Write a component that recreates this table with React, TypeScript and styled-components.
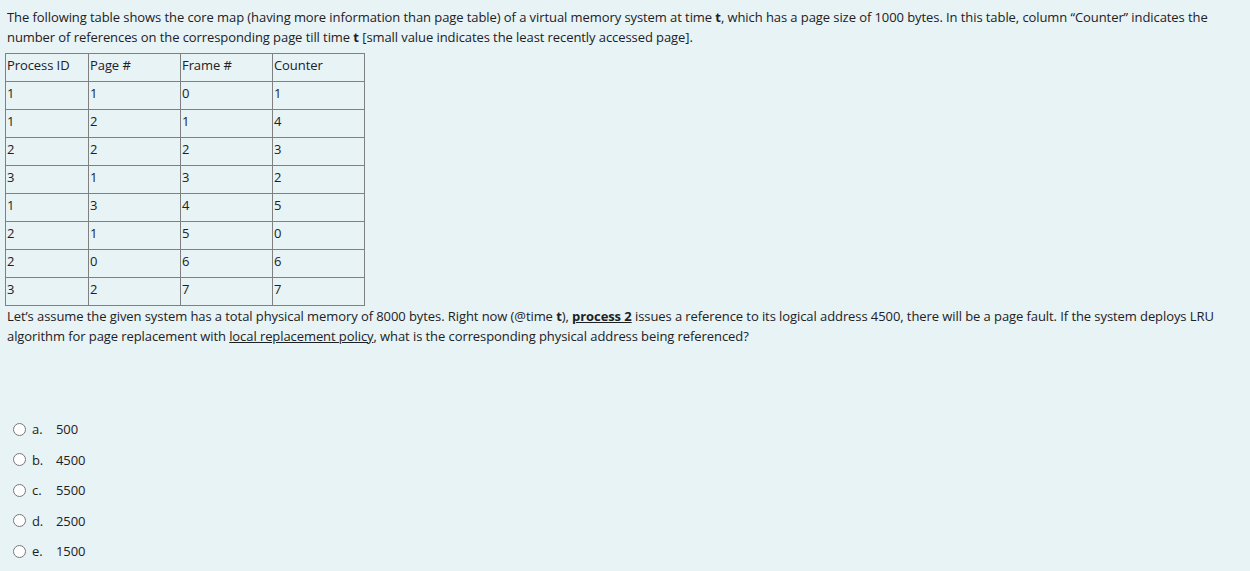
import React from 'react';
import styled, { createGlobalStyle } from 'styled-components';

const GlobalStyle = createGlobalStyle`
  html, body {
    margin: 0;
    padding: 0;
    background: #e7f3f5;
  }
  body {
    font-family: "Open Sans", "Noto Sans", sans-serif;
    font-size: 13px;
    letter-spacing: -0.08px;
    color: #1d2125;
  }
`;

const rows: [number, number, number, number][] = [
  [1, 1, 0, 1],
  [1, 2, 1, 4],
  [2, 2, 2, 3],
  [3, 1, 3, 2],
  [1, 3, 4, 5],
  [2, 1, 5, 0],
  [2, 0, 6, 6],
  [3, 2, 7, 7],
];

const columns = [
  { label: 'Process ID', width: 83 },
  { label: 'Page #', width: 92 },
  { label: 'Frame #', width: 92 },
  { label: 'Counter', width: 92 },
];

const options = [
  { letter: 'a.', value: '500' },
  { letter: 'b.', value: '4500' },
  { letter: 'c.', value: '5500' },
  { letter: 'd.', value: '2500' },
  { letter: 'e.', value: '1500' },
];

const App: React.FC = () => {
  return (
    <Page>
      <GlobalStyle />
      <Text>
        The following table shows the core map (having more information than page table) of a virtual memory system at
        time <b>t</b>, which has a page size of 1000 bytes. In this table, column “Counter” indicates the number of
        references on the corresponding page till time <b>t</b> [small value indicates the least recently accessed page].
      </Text>
      <Table>
        <thead>
          <tr>
            {columns.map((c) => (
              <Cell key={c.label} $width={c.width}>
                {c.label}
              </Cell>
            ))}
          </tr>
        </thead>
        <tbody>
          {rows.map((r, i) => (
            <tr key={i}>
              {r.map((v, j) => (
                <Cell key={j}>{v}</Cell>
              ))}
            </tr>
          ))}
        </tbody>
      </Table>
      <Text>
        Let’s assume the given system has a total physical memory of 8000 bytes. Right now (@time <b>t</b>),{' '}
        <Strong>process 2</Strong> issues a reference to its logical address 4500, there will be a page fault. If the
        system deploys LRU algorithm for page replacement with <Under>local replacement policy</Under>, what is the
        corresponding physical address being referenced?
      </Text>
      <Answers>
        {options.map((o) => (
          <Option key={o.letter}>
            <Radio type="radio" name="answer" />
            <Letter>{o.letter}</Letter>
            <span>{o.value}</span>
          </Option>
        ))}
      </Answers>
    </Page>
  );
};

const Page = styled.div`
  padding: 7px 5px 0 5px;
  max-width: 1222px;
`;

const Text = styled.p`
  margin: 0 0 0 2px;
  line-height: 20px;
`;

const Table = styled.table`
  border-collapse: collapse;
  table-layout: fixed;
  margin: 6px 0 0 0;
  width: 360px;

  tr {
    height: 28px;
  }
`;

const Cell = styled.td<{ $width?: number }>`
  box-sizing: border-box;
  border: 1px solid #808080;
  padding: 0 2px 0 1px;
  width: ${(p) => (p.$width ? `${p.$width}px` : 'auto')};
  vertical-align: top;
  line-height: 22px;
`;

const Strong = styled.b`
  text-decoration: underline;
`;

const Under = styled.span`
  text-decoration: underline;
`;

const Answers = styled.div`
  margin-top: 73px;
  display: flex;
  flex-direction: column;
  gap: 10px;
`;

const Option = styled.label`
  display: flex;
  align-items: center;
  height: 20.5px;
  padding-left: 8px;
`;

const Radio = styled.input`
  width: 13px;
  height: 13px;
  margin: 0 6px 0 0;
  accent-color: #0f6cbf;
`;

const Letter = styled.span`
  width: 24px;
`;

export default App;
